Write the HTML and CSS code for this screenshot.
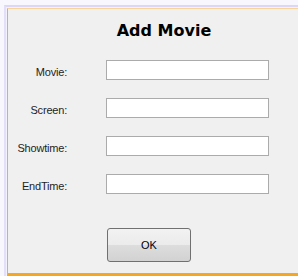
FILE: index.html
```html
<!DOCTYPE html>
<html lang="en">
<head>
    <meta charset="UTF-8">
    <meta name="viewport" content="width=device-width, initial-scale=1.0">
    <title>Add Movie</title>
    <link rel="stylesheet" href="styles.css">
</head>
<body>
    <div class="window">
        <div class="dialog">
            <h2>Add Movie</h2>
            <form class="movie-form">
                <label for="movie">Movie:</label>
                <input type="text" id="movie">
                <label for="screen">Screen:</label>
                <input type="text" id="screen">
                <label for="showtime">Showtime:</label>
                <input type="text" id="showtime">
                <label for="endtime">EndTime:</label>
                <input type="text" id="endtime">
                <button type="submit">OK</button>
            </form>
        </div>
    </div>
</body>
</html>
```

FILE: styles.css
```css
* {
    margin: 0;
    padding: 0;
    box-sizing: border-box;
}

body {
    background: #f8f7fd;
    font-family: "Liberation Sans", Arial, sans-serif;
    font-size: 11px;
    color: #1e1e1e;
    overflow: hidden;
}

.window {
    margin: 5px 0 0 4px;
    height: 271px;
    border-top: 2px solid #dcd6f7;
    border-left: 2px solid #e4dff8;
    background: #f3f1fb;
}

.dialog {
    margin: 1px 0 0 1px;
    height: 268px;
    background: #f0f0f0;
    border-top: 1px solid #f8d49a;
    border-left: 1px solid #f2a94a;
    border-bottom: 3px solid #f5a623;
    padding-top: 11px;
}

.dialog h2 {
    font-family: "DejaVu Sans", Verdana, sans-serif;
    font-size: 16px;
    font-weight: bold;
    line-height: 22px;
    color: #000;
    text-align: center;
    padding-left: 22px;
    margin-bottom: 18px;
}

.movie-form {
    display: grid;
    grid-template-columns: 59px 163px;
    column-gap: 39px;
    row-gap: 18px;
    align-items: start;
}

/* taller line box than the row, so the text sits a little low like the original */
.movie-form label {
    text-align: right;
    height: 20px;
    line-height: 24px;
    letter-spacing: -0.2px;
}

.movie-form input {
    height: 20px;
    border: 1px solid #ababab;
    background: #fff;
}

button {
    grid-column: 2;
    margin: 16px 0 0 1px;
    width: 84px;
    height: 34px;
    border: 1px solid #707070;
    border-radius: 3px;
    background: linear-gradient(#f2f2f2 0%, #ebebeb 50%, #dddddd 50%, #d2d2d2 100%);
    font-family: "Liberation Sans", Arial, sans-serif;
    font-size: 11px;
    color: #000;
}
```
